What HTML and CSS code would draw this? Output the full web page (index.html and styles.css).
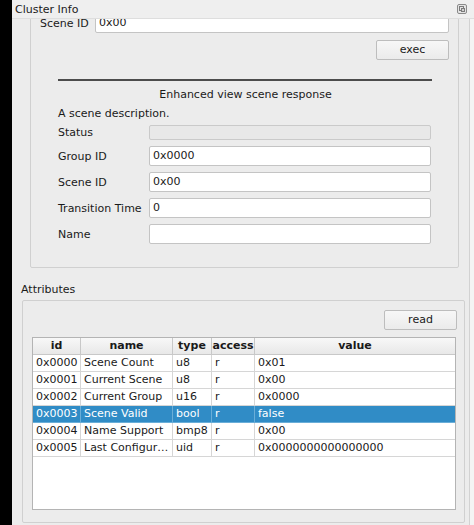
FILE: index.html
```html
<!DOCTYPE html>
<html>
<head>
<meta charset="utf-8">
<link rel="stylesheet" href="styles.css">
</head>
<body>
<div class="edge"></div>
<div class="dock">
  <div class="titlebar">
    <span class="title">Cluster Info</span>
    <svg class="float" width="10" height="10" viewBox="0 0 10 10">
      <rect x="0.5" y="0.5" width="9" height="9" rx="1.5" fill="#e4e4e4" stroke="#8a8a8a"/>
      <rect x="2.5" y="2.5" width="4" height="4" fill="none" stroke="#7a7a7a"/>
      <rect x="4.5" y="4.5" width="3" height="3" fill="#d0d0d0" stroke="#7a7a7a"/>
    </svg>
  </div>
  <div class="body">
    <div class="main">
      <div class="upper">
        <div class="group">
          <div class="scene-row">
            <span class="scene-lbl">Scene ID</span>
            <div class="input">0x00</div>
          </div>
          <div class="btnrow"><div class="btn">exec</div></div>
          <div class="resp">
            <div class="rule"></div>
            <div class="resp-title">Enhanced view scene response</div>
            <div class="desc">A scene description.</div>
            <div class="form">
              <span class="flbl">Status</span><div class="input status"></div>
              <span class="flbl">Group ID</span><div class="input">0x0000</div>
              <span class="flbl">Scene ID</span><div class="input">0x00</div>
              <span class="flbl">Transition Time</span><div class="input">0</div>
              <span class="flbl">Name</span><div class="input"></div>
            </div>
          </div>
        </div>
      </div>
      <div class="attrs">
        <div class="attrs-label">Attributes</div>
        <div class="attrs-box">
          <div class="btnrow first"><div class="btn">read</div></div>
          <div class="table">
            <div class="tr head"><div class="th">id</div><div class="th">name</div><div class="th">type</div><div class="th">access</div><div class="th">value</div></div>
            <div class="tr"><div class="td">0x0000</div><div class="td">Scene Count</div><div class="td">u8</div><div class="td">r</div><div class="td">0x01</div></div>
            <div class="tr"><div class="td">0x0001</div><div class="td">Current Scene</div><div class="td">u8</div><div class="td">r</div><div class="td">0x00</div></div>
            <div class="tr"><div class="td">0x0002</div><div class="td">Current Group</div><div class="td">u16</div><div class="td">r</div><div class="td">0x0000</div></div>
            <div class="tr sel"><div class="td">0x0003</div><div class="td">Scene Valid</div><div class="td">bool</div><div class="td">r</div><div class="td">false</div></div>
            <div class="tr"><div class="td">0x0004</div><div class="td">Name Support</div><div class="td">bmp8</div><div class="td">r</div><div class="td">0x00</div></div>
            <div class="tr"><div class="td">0x0005</div><div class="td">Last Configur…</div><div class="td">uid</div><div class="td">r</div><div class="td">0x0000000000000000</div></div>
          </div>
        </div>
      </div>
    </div>
    <div class="sbar"></div>
  </div>
</div>
</body>
</html>
```

FILE: styles.css
```css
* { box-sizing: border-box; }
html, body { margin: 0; padding: 0; }
body {
  width: 474px;
  height: 525px;
  overflow: hidden;
  display: flex;
  font-family: "DejaVu Sans", sans-serif;
  font-size: 11px;
  line-height: 13px;
  color: #1a1a1a;
  background: #ececec;
}
.edge { width: 12px; background: #000; flex: none; }
.dock { flex: 1; display: flex; flex-direction: column; min-width: 0; }
.titlebar {
  height: 19px;
  flex: none;
  background: #efefef;
  border-bottom: 1px solid #dedede;
  display: flex;
  align-items: center;
  justify-content: space-between;
  padding: 0 7px 0 3px;
}
.title { line-height: 13px; }
.float { display: block; margin-top: -1px; }
.body { flex: 1; display: flex; min-height: 0; }
.main { width: 457px; flex: none; display: flex; flex-direction: column; background: #ececec; }
.sbar { flex: 1; background: #f4f4f4; border-left: 1px solid #d2d2d2; }

.upper { overflow: hidden; flex: none; }
.group {
  margin: -7px 10px 0 18px;
  border: 1px solid #d0d0d0;
  border-radius: 2px;
  padding: 0 9px 23px 9px;
}
.scene-row { display: flex; align-items: center; height: 20px; }
.scene-lbl { width: 55px; flex: none; }
.scene-row .input { flex: 1; }
.input {
  height: 20px;
  background: #fff;
  border: 1px solid #c4c4c4;
  border-radius: 2px;
  padding: 0 3px;
  line-height: 18px;
}
.input.status { height: 15px; background: #e8e8e8; border-color: #cacaca; }
.btnrow { display: flex; justify-content: flex-end; margin-top: 7px; }
.btn {
  width: 73px;
  height: 20px;
  border: 1px solid #bdbdbd;
  border-radius: 2px;
  background: linear-gradient(#f7f7f7, #ebebeb);
  text-align: center;
  line-height: 18px;
}
.resp { padding: 0 17px 0 18px; }
.rule { margin-top: 19px; height: 2px; background: #4c4c4c; }
.resp-title { margin-top: 7px; text-align: center; padding-left: 1px; }
.desc { margin-top: 6px; }
.form {
  margin-top: 5px;
  display: grid;
  grid-template-columns: 91px 1fr;
  row-gap: 6px;
  align-items: center;
  margin-right: 1px;
}

.attrs { flex: 1; display: flex; flex-direction: column; }
.attrs-label { margin: 15px 0 0 9px; }
.attrs-box {
  margin: 4px 4px 0 10px;
  border: 1px solid #d0d0d0;
  border-radius: 2px;
  padding: 0 7px 12px 9px;
}
.btnrow.first { margin-top: 9px; }
.table {
  margin: 7px 1px 0 0;
  height: 173px;
  border: 1px solid #b4b4b4;
  background: #fff;
}
.tr {
  display: grid;
  grid-template-columns: 48px 92px 39px 43px 1fr;
  height: 17px;
}
.th, .td {
  height: 17px;
  border-right: 1px solid #d6d6d6;
  border-bottom: 1px solid #d6d6d6;
  line-height: 16px;
  padding: 0 2px 0 3px;
  white-space: nowrap;
  overflow: hidden;
}
.th:last-child, .td:last-child { border-right: none; }
.head .th {
  background: linear-gradient(#f8f8f8, #e8e8e8);
  border-color: #c8c8c8;
  font-weight: bold;
  text-align: center;
  padding: 0;
}
.sel .td {
  background: #308cc6;
  color: #fff;
  border-right-color: #6aaed8;
  border-bottom-color: #6aaed8;
}
```
